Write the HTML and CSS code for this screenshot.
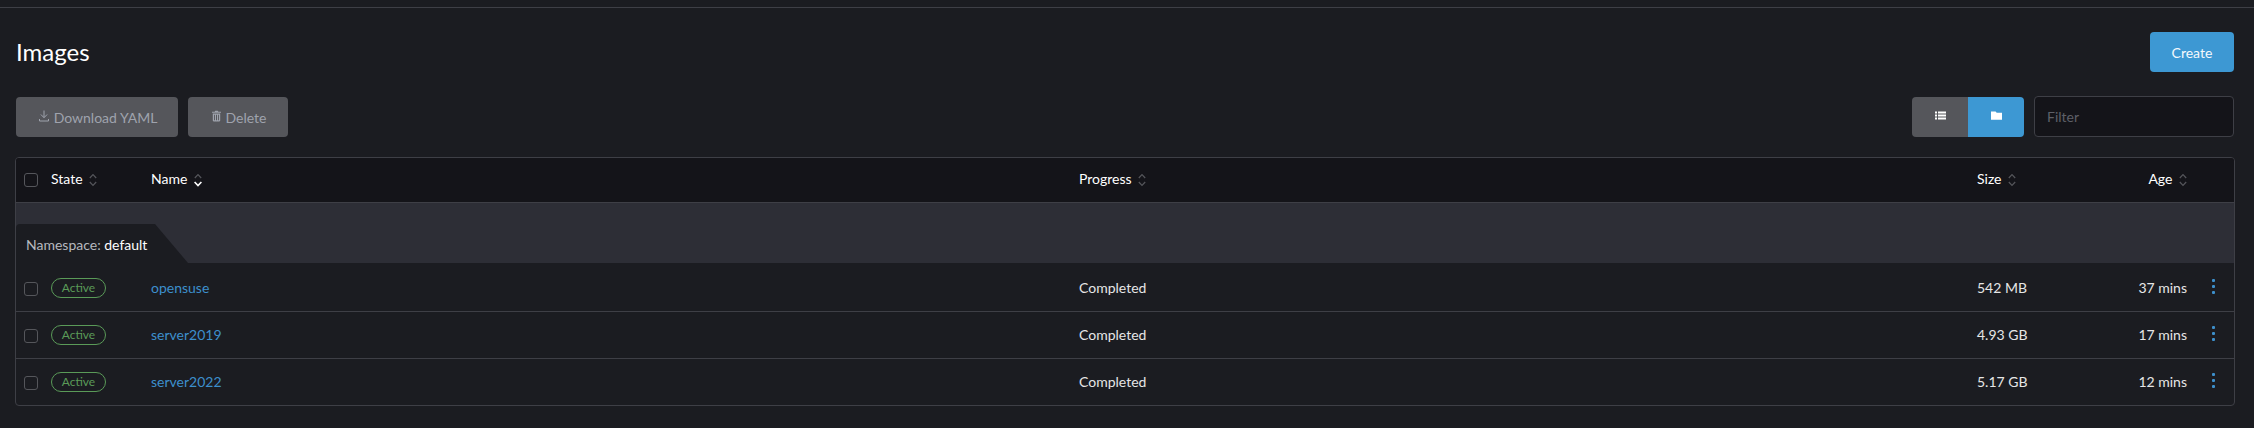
FILE: index.html
```html
<!DOCTYPE html>
<html lang="en">
<head>
<meta charset="utf-8">
<title>Images</title>
<link rel="stylesheet" href="styles.css">
</head>
<body>
<svg class="sprites" width="0" height="0" aria-hidden="true">
  <symbol id="sort" viewBox="0 0 8 14"><path d="M.8 5 4 1.6 7.2 5M.8 9 4 12.4 7.2 9" fill="none" stroke="currentColor" stroke-width="1.2"/></symbol>
  <symbol id="sort-down" viewBox="0 0 8 14"><path d="M.8 5 4 1.6 7.2 5" fill="none" stroke="#55565b" stroke-width="1.2"/><path d="M.6 9 4 12.6 7.4 9" fill="none" stroke="#fff" stroke-width="1.6"/></symbol>
</svg>
<header class="topbar"></header>
<main class="page">
  <div class="title-row">
    <h1>Images</h1>
    <button class="btn primary" type="button">Create</button>
  </div>
  <div class="tools">
    <div class="bulk">
      <button class="btn muted w-yaml" type="button">
        <svg class="ico ico-dl" viewBox="0 0 10 11"><path d="M5 0v7M1.9 4 5 7.2 8.1 4M.5 8.5v2h9v-2" fill="none" stroke="currentColor" stroke-width="1"/></svg>
        Download YAML
      </button>
      <button class="btn muted w-del" type="button">
        <svg class="ico ico-del" viewBox="0 0 9 11"><path d="M3.2.2h2.6l.5 1H9v1H0v-1h2.7zM.8 3h7.4v7.2l-.8.8H1.6l-.8-.8zm1.3 1.2v5.6H3V4.2zm1.9 0v5.6h1V4.2zm2 0v5.6h.9V4.2z" fill="currentColor" fill-rule="evenodd"/></svg>
        Delete
      </button>
    </div>
    <div class="filters">
      <div class="toggle">
        <button class="seg" type="button" aria-label="Flat list">
          <svg class="seg-ico" viewBox="0 0 11 8"><path d="M0 0h2v2H0zM3 0h8v2H3zM0 3h2v2H0zM3 3h8v2H3zM0 6h2v2H0zM3 6h8v2H3z" fill="#fff"/></svg>
        </button>
        <button class="seg on" type="button" aria-label="Group by namespace">
          <svg class="seg-ico" viewBox="0 0 12 9"><path d="M0 0h5l1.2 1.4H12V9H0z" fill="#fff"/></svg>
        </button>
      </div>
      <input class="filter" type="text" placeholder="Filter">
    </div>
  </div>
  <div class="table-box">
    <table>
      <colgroup>
        <col class="c-check"><col class="c-state"><col class="c-name"><col class="c-progress"><col class="c-size"><col class="c-age"><col class="c-act">
      </colgroup>
      <thead>
        <tr>
          <th><span class="check"></span></th>
          <th>State <svg class="sort"><use href="#sort"/></svg></th>
          <th>Name <svg class="sort"><use href="#sort-down"/></svg></th>
          <th>Progress <svg class="sort"><use href="#sort"/></svg></th>
          <th>Size <svg class="sort"><use href="#sort"/></svg></th>
          <th class="right">Age <svg class="sort"><use href="#sort"/></svg></th>
          <th></th>
        </tr>
      </thead>
      <tbody>
        <tr class="group">
          <td colspan="7"><div class="tab"><span class="tab-label">Namespace: <b>default</b></span></div></td>
        </tr>
        <tr class="first">
          <td><span class="check"></span></td>
          <td><span class="badge">Active</span></td>
          <td><a href="#">opensuse</a></td>
          <td>Completed</td>
          <td>542 MB</td>
          <td class="right">37 mins</td>
          <td><span class="kebab"><i></i><i></i><i></i></span></td>
        </tr>
        <tr>
          <td><span class="check"></span></td>
          <td><span class="badge">Active</span></td>
          <td><a href="#">server2019</a></td>
          <td>Completed</td>
          <td>4.93 GB</td>
          <td class="right">17 mins</td>
          <td><span class="kebab"><i></i><i></i><i></i></span></td>
        </tr>
        <tr class="last">
          <td><span class="check"></span></td>
          <td><span class="badge">Active</span></td>
          <td><a href="#">server2022</a></td>
          <td>Completed</td>
          <td>5.17 GB</td>
          <td class="right">12 mins</td>
          <td><span class="kebab"><i></i><i></i><i></i></span></td>
        </tr>
      </tbody>
    </table>
  </div>
</main>
</body>
</html>
```
FILE: styles.css
```css
* { box-sizing: border-box; }
html, body { margin: 0; height: 100%; }
body {
  background: #1b1c21;
  color: #e6e6e6;
  font-family: Lato, "Liberation Sans", sans-serif;
  font-size: 14px;
  line-height: 21px;
  overflow: hidden;
}
.sprites { position: absolute; }
.topbar { height: 8px; border-bottom: 1px solid #3e3f46; }
.page { padding: 24px 20px 0 16px; }
.title-row { display: flex; justify-content: space-between; align-items: center; height: 40px; }
h1 { margin: 0; font-size: 24px; font-weight: 400; line-height: 40px; color: #fff; }
.btn {
  height: 40px;
  border: 0;
  border-radius: 4px;
  padding: 0;
  font: inherit;
  display: inline-flex;
  align-items: center;
  justify-content: center;
  gap: 5px;
}
.primary { width: 84px; background: #3d98d3; color: #f4f9fd; }
.muted { background: #55565b; color: #9fa3ad; padding-left: 2px; }
.w-yaml { width: 162px; }
.w-del { width: 100px; }
.ico { height: 12px; margin-top: -3px; }
.ico-dl { width: 10px; }
.ico-del { width: 9px; }
.tools { display: flex; justify-content: space-between; margin-top: 25px; height: 40px; }
.bulk { display: flex; gap: 10px; }
.filters { display: flex; gap: 10px; }
.toggle { display: flex; border-radius: 4px; overflow: hidden; height: 40px; }
.seg { width: 56px; height: 40px; border: 0; padding: 0 0 3px; background: #55565b; display: flex; align-items: center; justify-content: center; }
.seg.on { background: #3d98d3; }
.seg-ico { width: 11px; height: 9px; }
.filter {
  width: 200px;
  height: 41px;
  margin-top: -1px;
  background: #141419;
  border: 1px solid #3e3f46;
  border-radius: 4px;
  padding: 0 12px;
  color: #e6e6e6;
  font: inherit;
  outline: 0;
}
.filter::placeholder { color: #5e6068; opacity: 1; }
.table-box {
  margin-top: 20px;
  width: 2220px;
  margin-left: -1px;
  border: 1px solid #3e3f46;
  border-radius: 4px;
  overflow: hidden;
}
table { width: 100%; border-collapse: separate; border-spacing: 0; table-layout: fixed; }
.c-check { width: 30px; }
.c-state { width: 100px; }
.c-name { width: 928px; }
.c-progress { width: 898px; }
.c-size { width: 150px; }
.c-age { width: 70px; }
th {
  height: 45px;
  padding: 0 5px 4px;
  background: #141419;
  border-bottom: 1px solid #3e3f46;
  font-weight: 400;
  text-align: left;
  color: #fff;
}
td { height: 47px; padding: 0 5px; color: #e6e6e6; border-bottom: 1px solid #3e3f46; }
td:nth-child(n+3) { padding-bottom: 2px; }
th:first-child, td:first-child { padding-left: 8px; }
th:first-child { padding-bottom: 1px; }
.first td { height: 49px; padding-top: 2px; }
.last td { height: 46px; border-bottom: 0; }
.right { text-align: right; }
.sort { width: 8px; height: 14px; margin-left: 3px; vertical-align: -3px; color: #55565b; }
.check { display: block; width: 14px; height: 14px; border: 1px solid #55565b; border-radius: 3px; background: #1b1c21; }
td .check { margin-top: 2px; }
th .check { background: #141419; }
.group td { height: 60px; padding: 0; vertical-align: bottom; background: #2d2e36; border-bottom: 0; }
.tab {
  position: relative;
  height: 39px;
  width: 172px;
  background: #1b1c21;
  clip-path: polygon(0 0, 139px 0, 172px 39px, 0 39px);
  border-top-left-radius: 4px;
  padding: 10px 0 0 10px;
  color: #b6b8bf;
}
.tab b { font-weight: 400; color: #fff; }
a { color: #3d8fcc; text-decoration: none; }
.badge {
  display: block;
  width: 55px;
  height: 20px;
  border: 1px solid #5a9a58;
  border-radius: 10px;
  color: #5a9a58;
  font-size: 12px;
  line-height: 17px;
  text-align: center;
}
.kebab { display: flex; flex-direction: column; gap: 3px; align-items: center; margin-top: -1px; }
.kebab i { display: block; width: 3px; height: 3px; border-radius: 1px; background: #3d8fcc; }
```
